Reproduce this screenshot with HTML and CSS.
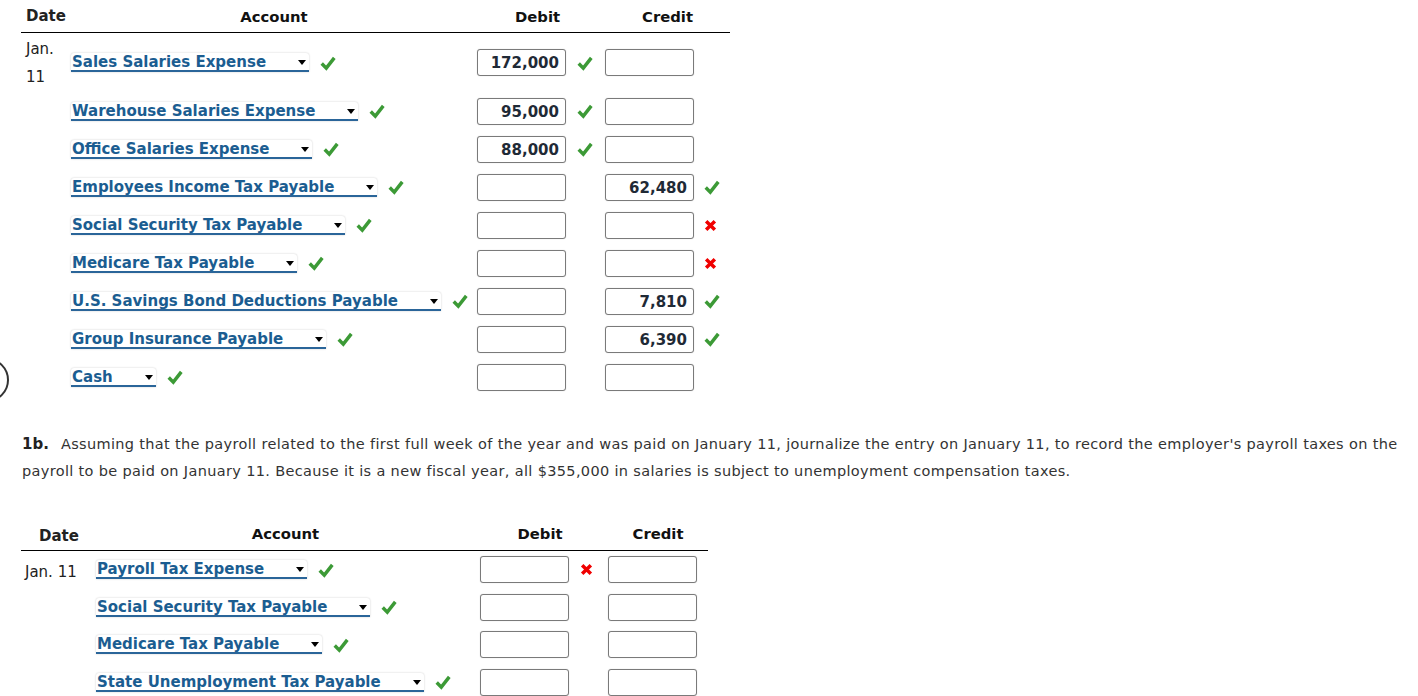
FILE: index.html
```html
<!DOCTYPE html>
<html>
<head>
<meta charset="utf-8">
<link rel="stylesheet" href="styles.css">
</head>
<body>
<div class="page">
  <div class="circle"></div>

  <section class="journal j1">
    <div class="jrow head">
      <div class="c-date">Date</div>
      <div class="c-acct">Account</div>
      <div class="c-debit">Debit</div>
      <div class="c-credit">Credit</div>
    </div>

    <div class="jrow first">
      <div class="c-date">Jan.<br>11</div>
      <div class="c-acct"><span class="sel">Sales Salaries Expense</span><svg class="ok" viewBox="0 0 14 14"><path d="M1.5 7.5 L5.5 11.5 L12.5 2.5"/></svg></div>
      <div class="c-debit"><span class="inp">172,000</span><svg class="ok" viewBox="0 0 14 14"><path d="M1.5 7.5 L5.5 11.5 L12.5 2.5"/></svg></div>
      <div class="c-credit"><span class="inp"></span></div>
    </div>

    <div class="jrow">
      <div class="c-date"></div>
      <div class="c-acct"><span class="sel">Warehouse Salaries Expense</span><svg class="ok" viewBox="0 0 14 14"><path d="M1.5 7.5 L5.5 11.5 L12.5 2.5"/></svg></div>
      <div class="c-debit"><span class="inp">95,000</span><svg class="ok" viewBox="0 0 14 14"><path d="M1.5 7.5 L5.5 11.5 L12.5 2.5"/></svg></div>
      <div class="c-credit"><span class="inp"></span></div>
    </div>

    <div class="jrow">
      <div class="c-date"></div>
      <div class="c-acct"><span class="sel">Office Salaries Expense</span><svg class="ok" viewBox="0 0 14 14"><path d="M1.5 7.5 L5.5 11.5 L12.5 2.5"/></svg></div>
      <div class="c-debit"><span class="inp">88,000</span><svg class="ok" viewBox="0 0 14 14"><path d="M1.5 7.5 L5.5 11.5 L12.5 2.5"/></svg></div>
      <div class="c-credit"><span class="inp"></span></div>
    </div>

    <div class="jrow">
      <div class="c-date"></div>
      <div class="c-acct"><span class="sel">Employees Income Tax Payable</span><svg class="ok" viewBox="0 0 14 14"><path d="M1.5 7.5 L5.5 11.5 L12.5 2.5"/></svg></div>
      <div class="c-debit"><span class="inp"></span></div>
      <div class="c-credit"><span class="inp">62,480</span><svg class="ok" viewBox="0 0 14 14"><path d="M1.5 7.5 L5.5 11.5 L12.5 2.5"/></svg></div>
    </div>

    <div class="jrow">
      <div class="c-date"></div>
      <div class="c-acct"><span class="sel">Social Security Tax Payable</span><svg class="ok" viewBox="0 0 14 14"><path d="M1.5 7.5 L5.5 11.5 L12.5 2.5"/></svg></div>
      <div class="c-debit"><span class="inp"></span></div>
      <div class="c-credit"><span class="inp"></span><svg class="bad" viewBox="0 0 12 12"><path d="M2 2 L10 10 M10 2 L2 10"/></svg></div>
    </div>

    <div class="jrow">
      <div class="c-date"></div>
      <div class="c-acct"><span class="sel">Medicare Tax Payable</span><svg class="ok" viewBox="0 0 14 14"><path d="M1.5 7.5 L5.5 11.5 L12.5 2.5"/></svg></div>
      <div class="c-debit"><span class="inp"></span></div>
      <div class="c-credit"><span class="inp"></span><svg class="bad" viewBox="0 0 12 12"><path d="M2 2 L10 10 M10 2 L2 10"/></svg></div>
    </div>

    <div class="jrow">
      <div class="c-date"></div>
      <div class="c-acct"><span class="sel">U.S. Savings Bond Deductions Payable</span><svg class="ok" viewBox="0 0 14 14"><path d="M1.5 7.5 L5.5 11.5 L12.5 2.5"/></svg></div>
      <div class="c-debit"><span class="inp"></span></div>
      <div class="c-credit"><span class="inp">7,810</span><svg class="ok" viewBox="0 0 14 14"><path d="M1.5 7.5 L5.5 11.5 L12.5 2.5"/></svg></div>
    </div>

    <div class="jrow">
      <div class="c-date"></div>
      <div class="c-acct"><span class="sel">Group Insurance Payable</span><svg class="ok" viewBox="0 0 14 14"><path d="M1.5 7.5 L5.5 11.5 L12.5 2.5"/></svg></div>
      <div class="c-debit"><span class="inp"></span></div>
      <div class="c-credit"><span class="inp">6,390</span><svg class="ok" viewBox="0 0 14 14"><path d="M1.5 7.5 L5.5 11.5 L12.5 2.5"/></svg></div>
    </div>

    <div class="jrow">
      <div class="c-date"></div>
      <div class="c-acct"><span class="sel">Cash</span><svg class="ok" viewBox="0 0 14 14"><path d="M1.5 7.5 L5.5 11.5 L12.5 2.5"/></svg></div>
      <div class="c-debit"><span class="inp"></span></div>
      <div class="c-credit"><span class="inp"></span></div>
    </div>
  </section>

  <p class="question"><b class="qnum">1b.</b><span class="qtext">Assuming that the payroll related to the first full week of the year and was paid on January 11, journalize the entry on January 11, to record the employer's payroll taxes on the payroll to be paid on January 11. Because it is a new fiscal year, all $355,000 in salaries is subject to unemployment compensation taxes.</span></p>

  <section class="journal j2">
    <div class="jrow head">
      <div class="c-date">Date</div>
      <div class="c-acct">Account</div>
      <div class="c-debit">Debit</div>
      <div class="c-credit">Credit</div>
    </div>

    <div class="jrow">
      <div class="c-date">Jan. 11</div>
      <div class="c-acct"><span class="sel">Payroll Tax Expense</span><svg class="ok" viewBox="0 0 14 14"><path d="M1.5 7.5 L5.5 11.5 L12.5 2.5"/></svg></div>
      <div class="c-debit"><span class="inp"></span><svg class="bad" viewBox="0 0 12 12"><path d="M2 2 L10 10 M10 2 L2 10"/></svg></div>
      <div class="c-credit"><span class="inp"></span></div>
    </div>

    <div class="jrow">
      <div class="c-date"></div>
      <div class="c-acct"><span class="sel">Social Security Tax Payable</span><svg class="ok" viewBox="0 0 14 14"><path d="M1.5 7.5 L5.5 11.5 L12.5 2.5"/></svg></div>
      <div class="c-debit"><span class="inp"></span></div>
      <div class="c-credit"><span class="inp"></span></div>
    </div>

    <div class="jrow">
      <div class="c-date"></div>
      <div class="c-acct"><span class="sel">Medicare Tax Payable</span><svg class="ok" viewBox="0 0 14 14"><path d="M1.5 7.5 L5.5 11.5 L12.5 2.5"/></svg></div>
      <div class="c-debit"><span class="inp"></span></div>
      <div class="c-credit"><span class="inp"></span></div>
    </div>

    <div class="jrow">
      <div class="c-date"></div>
      <div class="c-acct"><span class="sel">State Unemployment Tax Payable</span><svg class="ok" viewBox="0 0 14 14"><path d="M1.5 7.5 L5.5 11.5 L12.5 2.5"/></svg></div>
      <div class="c-debit"><span class="inp"></span></div>
      <div class="c-credit"><span class="inp"></span></div>
    </div>
  </section>
</div>
</body>
</html>
```

FILE: styles.css
```css
html, body {
  margin: 0;
  padding: 0;
  background: #fff;
}

body {
  font-family: "DejaVu Sans", Verdana, sans-serif;
  color: #222;
  overflow: hidden;
}

.page {
  position: relative;
  width: 1418px;
  height: 696px;
  overflow: hidden;
}

.circle {
  position: absolute;
  left: -35px;
  top: 358px;
  width: 40px;
  height: 40px;
  border: 2px solid #333;
  border-radius: 50%;
}

.journal {
  margin-left: 21px;
}

.j1 {
  width: 709px;
}

.j2 {
  width: 687px;
}

.jrow {
  display: grid;
  align-items: center;
}

.j1 .jrow {
  grid-template-columns: 45px 411px 128px 125px;
  height: 38px;
}

.j2 .jrow {
  grid-template-columns: 72px 387px 124px 104px;
  height: 37.5px;
}

.jrow.head {
  font-weight: bold;
  font-size: 14.8px;
  color: #111;
  border-bottom: 1px solid #000;
  text-align: center;
}

.j1 .jrow.head {
  height: 32px;
}

.j2 .jrow.head {
  height: 33px;
}

.j1 .head .c-date {
  text-align: left;
  padding-left: 5px;
}

.j1 .head .c-debit {
  padding-right: 7px;
}

.j2 .head .c-acct {
  padding-right: 5px;
}

.j2 .head .c-debit {
  padding-right: 4px;
}

.head .c-acct,
.head .c-debit,
.head .c-credit {
  display: block;
}

.j1 .jrow.first {
  height: 59px;
}

.c-date {
  font-size: 15px;
  color: #222;
}

.j1 .first .c-date {
  align-self: start;
  padding-top: 2px;
  padding-left: 5px;
  line-height: 28px;
}

.j2 .c-date {
  padding-left: 4px;
  padding-top: 4px;
}

.c-acct {
  display: flex;
  align-items: center;
  gap: 11px;
}

.j1 .c-acct {
  padding-left: 5px;
}

.j2 .c-acct {
  padding-left: 3px;
}

.c-debit,
.c-credit {
  display: flex;
  align-items: center;
  gap: 11px;
}

.c-credit {
  gap: 10px;
}

.j2 .c-credit {
  padding-left: 4px;
}

.sel {
  position: relative;
  display: inline-block;
  box-sizing: border-box;
  height: 19px;
  line-height: 18px;
  padding: 0 43px 0 1px;
  font-weight: bold;
  font-size: 15px;
  color: #1b5d91;
  white-space: nowrap;
  border-bottom: 2px solid #2a6599;
  border-radius: 3px 3px 0 0;
  box-shadow: 0 0 2px rgba(0, 0, 0, 0.22);
  background: #fff;
}

.sel::after {
  content: "";
  position: absolute;
  right: 3px;
  top: 7px;
  border-left: 4px solid transparent;
  border-right: 4px solid transparent;
  border-top: 5px solid #000;
}

.inp {
  display: block;
  box-sizing: border-box;
  width: 89px;
  height: 27px;
  line-height: 27px;
  border: 1px solid #7a7a7a;
  border-radius: 3px;
  box-shadow: 0 0 1px rgba(0, 0, 0, 0.25);
  text-align: right;
  padding-right: 6px;
  font-weight: bold;
  font-size: 15px;
  color: #1f2a36;
  background: #fff;
}

.ok {
  width: 16px;
  height: 16px;
  flex: none;
}

.ok path {
  fill: none;
  stroke: #3c9a36;
  stroke-width: 3;
  stroke-linecap: butt;
  stroke-linejoin: miter;
}

.bad {
  width: 13px;
  height: 13px;
  flex: none;
}

.bad path {
  fill: none;
  stroke: #f00000;
  stroke-width: 3.2;
}

.question {
  margin: 35px 0 32px 22px;
  width: 1392px;
  font-size: 14.5px;
  letter-spacing: 0.34px;
  line-height: 27px;
  color: #333;
}

.qnum {
  display: inline-block;
  font-size: 15px;
  letter-spacing: 0;
  color: #222;
  margin-right: 12px;
}
```
